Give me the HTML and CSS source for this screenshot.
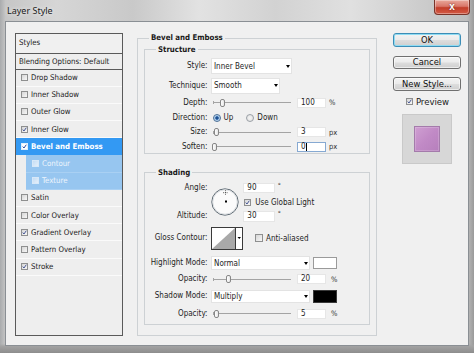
FILE: index.html
```html
<!DOCTYPE html>
<html>
<head>
<meta charset="utf-8">
<title>Layer Style</title>
<link rel="stylesheet" href="styles.css">
</head>
<body>
<div class="window">
  <div class="titlebar">
    <span class="title">Layer Style</span>
    <span class="close">x</span>
  </div>
  <div class="client">
    <div class="list">
      <div class="list-head">Styles</div>
      <div class="list-blend">Blending Options: Default</div>
      <div class="item"><span class="cb"></span>Drop Shadow</div>
      <div class="item"><span class="cb"></span>Inner Shadow</div>
      <div class="item"><span class="cb"></span>Outer Glow</div>
      <div class="item"><span class="cb"><svg viewBox="0 0 7 7" width="5" height="5"><path d="M1 3.6 L2.8 5.6 L6 1" fill="none" stroke="#2c3f88" stroke-width="1.2"/></svg></span>Inner Glow</div>
      <div class="item selected"><span class="cb"><svg viewBox="0 0 7 7" width="5" height="5"><path d="M1 3.6 L2.8 5.6 L6 1" fill="none" stroke="#1d3f9a" stroke-width="1.3"/></svg></span>Bevel and Emboss</div>
      <div class="item sub"><span class="cb"></span>Contour</div>
      <div class="item sub"><span class="cb"></span>Texture</div>
      <div class="item"><span class="cb"></span>Satin</div>
      <div class="item"><span class="cb"></span>Color Overlay</div>
      <div class="item"><span class="cb"><svg viewBox="0 0 7 7" width="5" height="5"><path d="M1 3.6 L2.8 5.6 L6 1" fill="none" stroke="#2c3f88" stroke-width="1.2"/></svg></span>Gradient Overlay</div>
      <div class="item"><span class="cb"></span>Pattern Overlay</div>
      <div class="item"><span class="cb"><svg viewBox="0 0 7 7" width="5" height="5"><path d="M1 3.6 L2.8 5.6 L6 1" fill="none" stroke="#2c3f88" stroke-width="1.2"/></svg></span>Stroke</div>
    </div>

    <fieldset class="group main">
      <legend>Bevel and Emboss</legend>

      <fieldset class="group structure">
        <legend>Structure</legend>
        <div class="rows">
          <div class="row h16">
            <span class="lbl">Style:</span>
            <div class="select w-style"><span>Inner Bevel</span><i class="arrow"></i></div>
          </div>
          <div class="row h16">
            <span class="lbl">Technique:</span>
            <div class="select w-tech"><span>Smooth</span><i class="arrow"></i></div>
          </div>
          <div class="row h11">
            <span class="lbl">Depth:</span>
            <div class="slider"><span class="thumb" style="left:6.5px"></span></div>
            <div class="field">100</div>
            <span class="unit">%</span>
          </div>
          <div class="row h11">
            <span class="lbl">Direction:</span>
            <span class="radio on"></span><span class="rtext">Up</span>
            <span class="radio second"></span><span class="rtext">Down</span>
          </div>
          <div class="row h11">
            <span class="lbl">Size:</span>
            <div class="slider"><span class="thumb" style="left:0.5px"></span></div>
            <div class="field">3</div>
            <span class="unit">px</span>
          </div>
          <div class="row h11">
            <span class="lbl">Soften:</span>
            <div class="slider"><span class="thumb" style="left:-1px"></span></div>
            <div class="field focus">0<span class="caret"></span></div>
            <span class="unit">px</span>
          </div>
        </div>
      </fieldset>

      <fieldset class="group shading">
        <legend>Shading</legend>
        <div class="rows2">
          <div class="angle-block">
            <span class="lbl a-lbl">Angle:</span>
            <div class="dial">
              <svg viewBox="0 0 28 28" width="28" height="28">
                <circle cx="14" cy="14" r="13.2" fill="#fbfbfb" stroke="#5e6a73" stroke-width="1"/>
                <circle cx="14" cy="14" r="12.2" fill="none" stroke="#d4d8dc" stroke-width="0.8"/>
                <path d="M14.5 2.2 V7.2 M12 4.7 H17" stroke="#444" stroke-width="0.8" stroke-dasharray="1 0.8"/>
                <rect x="14" y="12.5" width="2" height="2" fill="#000"/>
              </svg>
            </div>
            <div class="a-in"><div class="field w-angle">90</div><span class="deg">°</span></div>
            <div class="a-gl"><span class="cb cb-form"><svg viewBox="0 0 7 7" width="5" height="5"><path d="M1 3.6 L2.8 5.6 L6 1" fill="none" stroke="#2c3f88" stroke-width="1.2"/></svg></span><span class="gltext">Use Global Light</span></div>
            <span class="lbl alt-lbl">Altitude:</span>
            <div class="alt-in"><div class="field w-angle">30</div><span class="deg">°</span></div>
          </div>

          <div class="row contour-row">
            <span class="lbl">Gloss Contour:</span>
            <div class="contour">
              <svg viewBox="0 0 32 23" width="32" height="23">
                <rect x="0.5" y="0.5" width="31" height="22" fill="#fff" stroke="#3a3a3a"/>
                <polygon points="1,22 24,1 24,22" fill="#a9a9a9"/>
                <line x1="24.5" y1="1" x2="24.5" y2="22" stroke="#3a3a3a"/>
                <polygon points="26.5,10 30,10 28.25,12" fill="#000"/>
              </svg>
            </div>
            <span class="cb cb-form aa"></span><span class="gltext">Anti-aliased</span>
          </div>

          <div class="row mode-row hl">
            <span class="lbl">Highlight Mode:</span>
            <div class="select w-mode"><span>Normal</span><i class="arrow"></i></div>
            <span class="swatch white"></span>
          </div>
          <div class="row op-row op1">
            <span class="lbl">Opacity:</span>
            <div class="slider"><span class="thumb" style="left:12.5px"></span></div>
            <div class="field">20</div>
            <span class="unit pct">%</span>
          </div>
          <div class="row mode-row sh">
            <span class="lbl">Shadow Mode:</span>
            <div class="select w-mode"><span>Multiply</span><i class="arrow"></i></div>
            <span class="swatch black"></span>
          </div>
          <div class="row op-row op2">
            <span class="lbl">Opacity:</span>
            <div class="slider"><span class="thumb" style="left:1.2px"></span></div>
            <div class="field">5</div>
            <span class="unit pct">%</span>
          </div>
        </div>
      </fieldset>
    </fieldset>

    <div class="side">
      <div class="btn ok">OK</div>
      <div class="btn">Cancel</div>
      <div class="btn">New Style...</div>
      <div class="preview-row"><span class="cb cb-form"><svg viewBox="0 0 7 7" width="5" height="5"><path d="M1 3.6 L2.8 5.6 L6 1" fill="none" stroke="#2c3f88" stroke-width="1.2"/></svg></span><span>Preview</span></div>
      <div class="preview-box"><div class="swatch-prev"></div></div>
    </div>
  </div>
</div>
</body>
</html>
```

FILE: styles.css
```css
* { box-sizing: border-box; }
html, body { margin: 0; padding: 0; }
body {
  width: 474px;
  height: 353px;
  overflow: hidden;
  background: #b9b9b9;
  font-family: "DejaVu Sans Condensed", "DejaVu Sans", sans-serif;
  font-stretch: condensed;
  color: #000;
}

.window {
  width: 474px;
  height: 353px;
  display: flex;
  flex-direction: column;
  padding: 0 5px 7px 5px;
  background:
    linear-gradient(to bottom, rgba(0,0,0,0) 344px, #a3a3a3 346px, #8d8d8d 353px),
    linear-gradient(to right, #a9abad 0, #c6c6c6 1.2%, #d6d6d6 12%, #c9c9c9 28%, #e2e2e2 42%, #d2d2d2 58%, #e0e0e0 74%, #cbcbcb 90%, #bdbdbd 98.5%, #9a9a9a 100%);
}

.titlebar {
  height: 21px;
  flex: none;
  display: flex;
  justify-content: space-between;
  align-items: flex-start;
  padding-left: 2px;
}
.title {
  font-family: "Noto Sans", sans-serif;
  font-stretch: normal;
  font-size: 9px;
  line-height: 22px;
  color: #1a1a1a;
  text-shadow: 0 0 4px rgba(255,255,255,0.9);
}
.close {
  width: 36px;
  height: 15px;
  margin-right: -1px;
  border: 1px solid #7a3328;
  border-top: none;
  border-radius: 0 0 4px 4px;
  background: linear-gradient(to bottom, #e9a89b 0%, #d9776a 45%, #c33e2a 55%, #d35a45 100%);
  box-shadow: inset 0 0 0 1px rgba(255,255,255,0.35);
  color: #fff;
  font-family: "Liberation Sans", sans-serif;
  font-stretch: normal;
  font-weight: bold;
  font-size: 10px;
  line-height: 13px;
  text-align: center;
  text-shadow: 0 0 2px #5a1a10;
}

.client {
  flex: 1;
  display: flex;
  align-items: flex-start;
  background: #f0f0f0;
  border: 1px solid #8a8f94;
  padding: 11px 0 0 9px;
}

/* ---------- left list ---------- */
.list {
  width: 108px;
  height: 303px;
  flex: none;
  border: 1px solid #5a5a5a;
  background: #eeeeee;
  font-size: 7.8px;
  color: #1b1b1b;
}
.list-head {
  height: 19.5px;
  line-height: 18.5px;
  padding-left: 3px;
  border-bottom: 1px solid #5a5a5a;
  background: #f0f0f0;
}
.list-blend {
  height: 16px;
  line-height: 15px;
  padding-left: 3px;
  border-bottom: 1px solid #5a5a5a;
}
.item {
  height: 17.2px;
  display: flex;
  align-items: center;
  padding-left: 5px;
  border-bottom: 1px solid #fafafa;
}
.item.selected {
  background: #3399f3;
  border-bottom-color: #3399f3;
  color: #fff;
  font-weight: bold;
}
.item.sub {
  margin-left: 10px;
  padding-left: 6px;
  background: #97c6f0;
  border-bottom-color: #a9d0f3;
  color: #eef5fc;
}
.cb {
  width: 7px;
  height: 7px;
  flex: none;
  margin-right: 3px;
  border: 1px solid #8e8f8f;
  background: linear-gradient(135deg, #d6d6d6, #f7f7f7);
  display: inline-flex;
  align-items: center;
  justify-content: center;
}
.cb svg { display: block; }
.item.selected .cb { background: #fff; border-color: #dfeefc; }
.item.sub .cb { background: linear-gradient(135deg, #c5ddf4, #e4effa); border-color: #d7e8f8; }

/* ---------- fieldsets ---------- */
.group {
  margin: 0;
  min-width: 0;
  border: 1px solid #cdd1d4;
  padding: 0;
}
.group legend {
  font-weight: bold;
  font-size: 7.8px;
  line-height: 10px;
  height: 10px;
  padding: 0 2px;
  color: #1a1a1a;
}
.main {
  margin-left: 14px;
  width: 240px;
  height: 303px;
  flex: none;
  padding: 0 6px;
}
.main > legend { margin-left: 5px; }
.structure {
  margin-top: 1.5px;
  width: 226px;
}
.structure > legend, .shading > legend { margin-left: 11px; }

.rows {
  display: flex;
  flex-direction: column;
  gap: 3.6px;
  padding: 3.8px 0 1px 0;
}
.row {
  display: flex;
  align-items: center;
  font-size: 8px;
  color: #1e1e1e;
}
.h16 { height: 16px; }
.h11 { height: 11px; }
.lbl {
  width: 62.5px;
  margin-right: 3.5px;
  flex: none;
  text-align: right;
  font-size: 8px;
  line-height: 10px;
  color: #1e1e1e;
  white-space: nowrap;
}

.select {
  height: 100%;
  display: flex;
  align-items: center;
  justify-content: space-between;
  background: #fff;
  border: 1px solid #e3e3e3;
  padding: 0 1.5px 0 2px;
  font-size: 8px;
}
.w-style { width: 81px; }
.w-tech { width: 69px; }
.w-mode { width: 99px; }
.arrow {
  width: 0;
  height: 0;
  border-left: 2.5px solid transparent;
  border-right: 2.5px solid transparent;
  border-top: 3px solid #000;
}

.slider {
  position: relative;
  width: 78px;
  height: 9px;
  margin-left: 2px;
  flex: none;
}
.slider::before {
  content: "";
  position: absolute;
  left: 0;
  right: 0;
  top: 4px;
  height: 1px;
  background: #a4a4a4;
}
.slider::after {
  content: "";
  position: absolute;
  left: 0;
  top: 3px;
  width: 1px;
  height: 3px;
  background: #a4a4a4;
}
.thumb {
  position: absolute;
  top: 0.5px;
  width: 5px;
  height: 8px;
  border: 1px solid #878787;
  border-radius: 2px;
  background: linear-gradient(to right, #ffffff, #e6e6e6);
  z-index: 1;
}

.field {
  width: 29px;
  height: 10.5px;
  margin-left: 6px;
  flex: none;
  background: #fff;
  border: 1px solid #e6e6e6;
  padding-left: 3px;
  display: flex;
  align-items: center;
  font-size: 8px;
  line-height: 8px;
}
.field.focus { border-color: #86a9d2; }
.caret {
  width: 1px;
  height: 8px;
  background: #000;
  margin-left: 0;
}
.unit {
  margin-left: 3px;
  font-size: 7.5px;
  color: #333;
}
.unit.pct { margin-left: 5px; }

.radio {
  width: 8px;
  height: 8px;
  flex: none;
  border-radius: 50%;
  margin-left: 1.5px;
  border: 1px solid #9aa0a6;
  background: radial-gradient(circle, #f6f6f6 0, #dedede 100%);
}
.radio.on {
  border-color: #4b6f96;
  background: radial-gradient(circle, #163e78 0, #2d64a8 35%, #9fc3e6 45%, #e9f1f9 100%);
}
.radio.second { margin-left: 13px; }
.rtext { margin-left: 3px; font-size: 8px; }

/* ---------- shading ---------- */
.shading {
  margin-top: 13.4px;
  width: 226px;
}
.rows2 {
  display: flex;
  flex-direction: column;
  padding: 5.3px 0 5px 0;
}
.angle-block {
  display: grid;
  grid-template-columns: 66px 32.3px auto;
  grid-template-rows: 10.5px 11px 10.5px;
  row-gap: 3.3px;
  font-size: 8px;
  color: #1e1e1e;
}
.a-lbl { grid-column: 1; grid-row: 1; align-self: center; }
.alt-lbl { grid-column: 1; grid-row: 3; align-self: center; }
.dial {
  grid-column: 2;
  grid-row: 1 / 4;
  align-self: center;
  width: 28px;
  height: 28px;
}
.dial svg { display: block; }
.a-in { grid-column: 3; grid-row: 1; display: flex; align-items: flex-start; }
.alt-in { grid-column: 3; grid-row: 3; display: flex; align-items: flex-start; }
.a-gl { grid-column: 3; grid-row: 2; display: flex; align-items: center; padding-left: 1px; }
.w-angle { width: 31.5px; margin-left: 0; }
.deg { margin-left: 3px; font-size: 7px; line-height: 6px; color: #333; }
.cb-form { margin-right: 4px; }
.gltext { font-size: 8px; color: #1e1e1e; }

.contour-row { height: 23.3px; margin-top: 5px; }
.contour { width: 32px; height: 23px; flex: none; }
.contour svg { display: block; }
.cb.aa { width: 8px; height: 8px; margin-left: 11.5px; margin-right: 3.5px; }

.mode-row { height: 13.5px; }
.mode-row.hl { margin-top: 6.5px; }
.mode-row.sh { margin-top: 5.7px; height: 13.3px; }
.op-row { height: 10px; }
.op-row.op1 { margin-top: 4.3px; }
.op-row.op2 { margin-top: 5.7px; }
.swatch {
  width: 24px;
  height: 12.3px;
  margin-left: 3px;
  flex: none;
  border: 1px solid #9a9a9a;
}
.swatch.white { background: #fff; }
.swatch.black { background: #000; border-color: #3a3a3a; }

/* ---------- side column ---------- */
.side {
  margin-left: 16px;
  width: 68px;
  flex: none;
  display: flex;
  flex-direction: column;
  font-size: 9.3px;
}
.btn {
  height: 13.3px;
  border: 1px solid #707070;
  border-radius: 3px;
  background: linear-gradient(to bottom, #f3f3f3 0%, #ebebeb 48%, #dddddd 52%, #cfcfcf 100%);
  box-shadow: inset 0 0 0 1px rgba(255,255,255,0.6);
  display: flex;
  align-items: center;
  justify-content: center;
  line-height: 10px;
  color: #111;
  margin-top: 8.5px;
}
.btn.ok {
  height: 14px;
  margin-top: 0;
  border-color: #3c8db6;
  box-shadow: inset 0 0 0 1px #8fdcf3;
}
.btn.ok + .btn { margin-top: 8.7px; }
.preview-row {
  margin-top: 7px;
  height: 8px;
  display: flex;
  align-items: center;
  justify-content: center;
  font-size: 9.5px;
  color: #1a1a1a;
  padding-left: 1px;
}
.preview-row .cb-form { margin-right: 3px; }
.preview-box {
  margin-top: 8px;
  align-self: center;
  width: 50px;
  height: 50px;
  background: #d7d7d7;
  border: 1px solid #c9c9c9;
  display: flex;
  align-items: center;
  justify-content: center;
  margin-left: -1px;
}
.swatch-prev {
  width: 26px;
  height: 26px;
  border: 1px solid #a47bab;
  background: linear-gradient(135deg, #cf9fd2 0%, #c18ac6 50%, #b67fbc 100%);
  box-shadow: inset 0 0 0 1px rgba(255,255,255,0.18);
}
```
